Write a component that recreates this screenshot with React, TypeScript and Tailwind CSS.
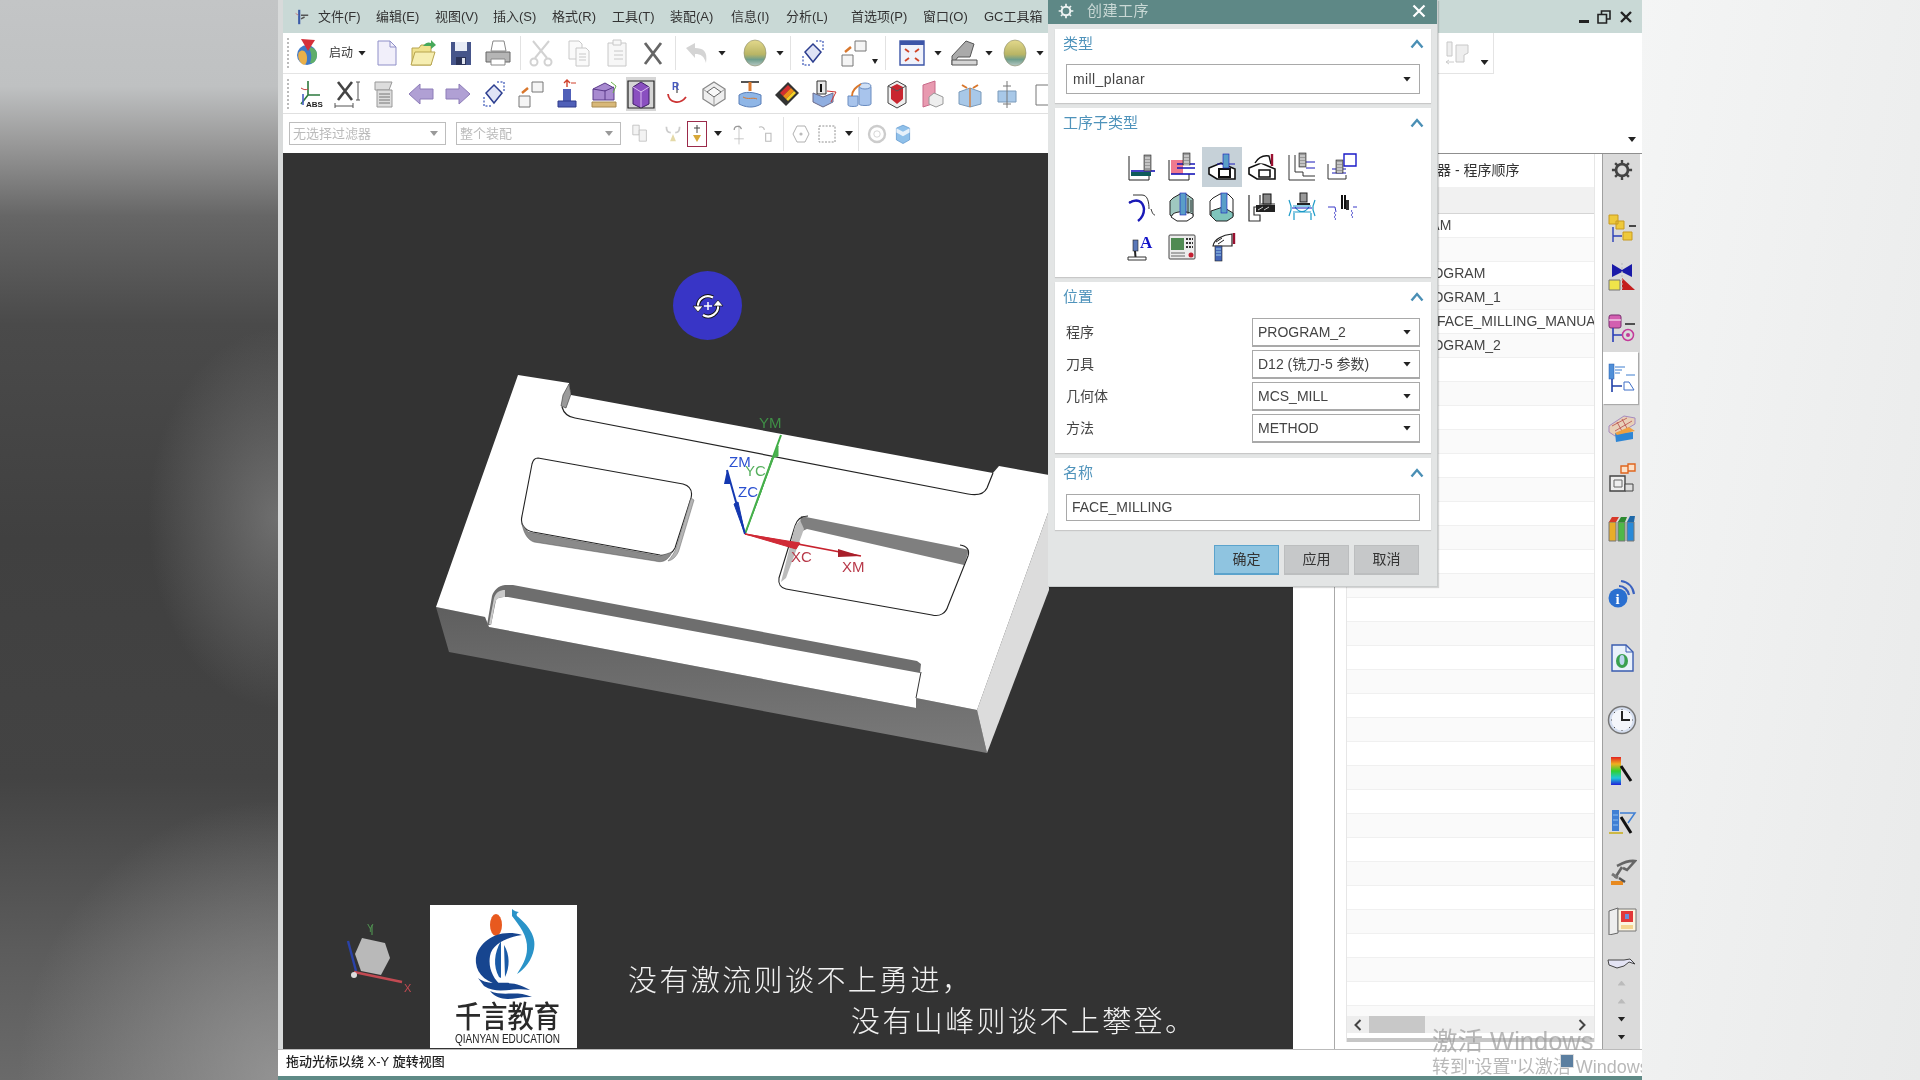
import React from "react";

type P = { children?: React.ReactNode; w?: string };
const I = ({ children, s = "w-[30px] h-[30px]" }: { children?: React.ReactNode; s?: string }) => (
  <svg viewBox="0 0 30 30" className={s} fill="none">{children}</svg>
);
const C = ({ children, w }: P) => <div className={`${w} shrink-0 flex items-center justify-center`}>{children}</div>;
const Sp = ({ w }: P) => <div className={`${w} shrink-0`} />;
const Caret = ({ c = "bg-[#222]" }: { c?: string }) => (
  <div className={`w-[8px] h-[5px] ${c} [clip-path:polygon(0_0,100%_0,50%_100%)]`} />
);
const Sep = ({ w }: P) => (
  <div className={`${w} shrink-0 flex justify-center`}><div className="w-px h-[34px] bg-[#e2e2e2]" /></div>
);
const Grip = () => <div className="w-[10px] shrink-0 flex justify-center"><div className="h-[30px] border-l-2 border-dotted border-[#bbb]" /></div>;

const Egg = ({ id }: { id: string }) => (
  <I>
    <defs>
      <linearGradient id={id} x1="0" y1="0" x2="0" y2="1">
        <stop offset="0" stopColor="#e3d98c" /><stop offset="0.55" stopColor="#b9b565" /><stop offset="0.75" stopColor="#6f9e8c" /><stop offset="1" stopColor="#b8c9c4" />
      </linearGradient>
    </defs>
    <ellipse cx="15" cy="15" rx="11" ry="13" fill={`url(#${id})`} stroke="#8a8a6a" strokeWidth="0.6" />
  </I>
);

/* toolbar row 1 drawings */
const NxLogo = () => (
  <I s="w-[32px] h-[36px]">
    <circle cx="14" cy="17" r="10" fill="#3f78c8" />
    <path d="M6 14c4-4 8 0 8 6s-2 8-5 6c-3-3-5-8-3-12Z" fill="#e9b04a" />
    <path d="M15 9c5 0 10 3 9 9s-4 8-7 7c2-5 2-11-2-16Z" fill="#5fae6a" />
    <path d="M8 1l14 1-7 11Z" fill="#d6303a" />
  </I>
);
const NewDoc = () => <I><path d="M6 3h12l6 6v18H6Z" fill="#f1effa" stroke="#8f8fc8" /><path d="M18 3v6h6" stroke="#8f8fc8" /></I>;
const Open = () => <I><path d="M4 10h7l2-3h10v20H4Z" fill="#f0e28e" stroke="#b7a44f" /><path d="M3 27l4-13h20l-4 13Z" fill="#f6eeb2" stroke="#b7a44f" /><path d="M15 8c3-4 6-4 8-3V2l5 5-5 4V8c-3 0-5 0-8 0Z" fill="#46a85a" /></I>;
const Save = () => <I><path d="M5 4h20v23H5Z" fill="#46558a" /><path d="M9 4h12v9H9Z" fill="#e8ecf5" /><path d="M10 19h10v8H10Z" fill="#2b3358" /><path d="M16 20h3v6h-3Z" fill="#dfe3ee" /></I>;
const Print = () => <I><path d="M10 3h11l2 10H8Z" fill="#fff" stroke="#888" /><path d="M3 14h24v10H3Z" fill="#b5b5b5" stroke="#666" /><path d="M8 21h14v6H8Z" fill="#fff" stroke="#888" /></I>;
const Cut = () => <I><g stroke="#d2d2d2" strokeWidth="2"><path d="M9 20 23 3M21 20 7 3" /><circle cx="8" cy="24" r="3.5" /><circle cx="22" cy="24" r="3.5" /></g></I>;
const Copy = () => <I><g stroke="#c8c8c8" fill="#fafafa"><path d="M5 3h10l3 3v15H5Z" /><path d="M12 10h10l3 3v15H12Z" /><path d="M15 16h7M15 19h7M15 22h7" /></g></I>;
const Paste = () => <I><g stroke="#c8c8c8" fill="#f7f7f7"><path d="M6 5h18v23H6Z" /><path d="M11 2h8v5h-8Z" /><path d="M12 13h9M12 17h9M12 21h9" /></g></I>;
const XX = () => <I><path d="M7 5l16 21M23 5 7 26" stroke="#666" strokeWidth="2.8" /></I>;
const Undo = () => <I><path d="M4 10 13 5v5c8 0 13 3 11 15-2-7-5-9-11-9v4Z" fill="#d4d4d4" /></I>;
const Diamond = () => <I><path d="M15 6l8 8-8 10-8-10Z" fill="#dfe3f5" stroke="#2c3e8f" strokeWidth="1.5" /><path d="M5 18v9h8M25 12V3h-8" stroke="#5d74c4" strokeDasharray="2 1.5" strokeWidth="1.5" /></I>;
const Squares = () => <I><path d="M16 3h11v10H16ZM3 17h11v11H3Z" fill="#f5f5f5" stroke="#777" /><path d="M6 14l6-5" stroke="#d9772c" strokeWidth="2.4" /></I>;
const Fit = () => <I><path d="M3 3h24v24H3Z" fill="#f0f2fb" stroke="#3c55a8" strokeWidth="1.4" /><path d="M3 3h24v4H3Z" fill="#3c55a8" /><path d="M8 11l4 3M22 11l-4 3M8 23l4-3M22 23l-4-3" stroke="#d0452a" strokeWidth="1.8" /></I>;
const Shape = () => <I><path d="M3 27V18L17 3l8 3-4 13H9Z" fill="#aaa" stroke="#555" /><path d="M3 22h25v5H3Z" fill="#d5d5d5" stroke="#555" /></I>;

/* toolbar row 2 drawings */
const R2: React.ReactNode[] = [
  <I key="0"><path d="M12 2v14H24M12 16 5 25" stroke="#2d7a3e" strokeWidth="1.6" /><path d="M5 9c3 2 5 2 7 1" stroke="#c43a3a" /><path d="M7 15v11" stroke="#4a5fc4" strokeWidth="1.6" /><text x="10" y="28" fontSize="8" fontWeight="700" fill="#222" fontFamily="Liberation Sans">ABS</text></I>,
  <I key="1"><path d="M5 3l14 18M19 3 5 21" stroke="#444" strokeWidth="2.6" /><path d="M23 3h4M25 3v18M23 21h4M2 27h18M2 24v5M20 24v5" stroke="#555" /></I>,
  <I key="2"><g fill="#ddd" stroke="#999"><path d="M6 3h17l-3 8H6Z" /><path d="M8 11h15v17H8Z" /></g><path d="M10 15h11M10 18h11M10 21h11M10 24h11" stroke="#777" /></I>,
  <I key="3"><path d="M3 15 14 5v5h13v10H14v5Z" fill="#b0a0d4" stroke="#8d7cb8" /></I>,
  <I key="4"><path d="M27 15 16 5v5H3v10h13v5Z" fill="#b0a0d4" stroke="#8d7cb8" /></I>,
  <Diamond key="5" />,
  <Squares key="6" />,
  <I key="7"><path d="M11 10h8v12h-8Z" fill="#5060b8" /><path d="M6 22h18v6H6Z" fill="#5060b8" stroke="#2e3b8a" /><path d="M15 8V1M12 4l3-3 3 3" stroke="#d0402a" strokeWidth="1.4" /><path d="M19 4h5" stroke="#d0402a" /></I>,
  <I key="8"><path d="M4 10 16 4l9 5v12H4Z" fill="#a88ad0" stroke="#5b3a8a" /><path d="M16 11V21M4 10l12 2 9-4" stroke="#5b3a8a" /><path d="M3 23h24v5H3Z" fill="#d8b878" stroke="#a88a50" /><path d="M22 3l5 4-3 7" stroke="#6ab04a" /></I>,
  <div key="9" className="bg-[#d6d6d6] w-[30px] h-[34px] flex items-center justify-center"><I><path d="M7 8l8-5 8 5v17l-8 4-8-4Z" fill="#8a4fc0" stroke="#3e1f66" /><path d="M15 12v17M7 8l8 5 8-5" stroke="#d8b8f0" /><path d="M2 2h26v27H2Z" stroke="#222" strokeWidth="1.2" /></I></div>,
  <I key="10"><path d="M6 15c1 9 12 11 18 3" stroke="#c33" strokeWidth="1.8" /><path d="M15 14V4" stroke="#666" strokeWidth="1.4" /><text x="10" y="11" fontSize="10" fontWeight="700" fill="#4659c0" fontFamily="Liberation Sans">R</text></I>,
  <I key="11"><path d="M15 3 26 10v10L15 27 4 20V10Z" fill="#eee" stroke="#888" strokeWidth="1.3" /><path d="M15 8l7 5-7 5-7-5Z" fill="#f8f8f8" stroke="#666" /><path d="M15 27V18M4 10l4 3M26 10l-4 3" stroke="#999" /></I>,
  <I key="12"><path d="M6 3h18" stroke="#555" strokeWidth="2" /><path d="M15 3v9" stroke="#d9772c" strokeWidth="3" /><path d="M4 16c6-4 14-3 22 0v9c-8 5-16 3-22 0Z" fill="#8fb6e6" stroke="#5a7fb8" /><path d="M8 18c5 3 10 0 14 2" stroke="#d9772c" /></I>,
  <I key="13"><path d="M3 16 16 3l11 11-13 13Z" fill="#333" /><path d="M8 14 16 6l3 3-8 8Z" fill="#d32f2f" /><path d="M11 17l8-8 3 3-8 8Z" fill="#ef8c1a" /><path d="M14 20l8-8 2 2-8 8Z" fill="#f5d32a" /></I>,
  <I key="14"><path d="M8 2h9v13H8Z" fill="#e8e8e8" stroke="#333" /><path d="M12 5v8" stroke="#111" strokeWidth="2" /><path d="M4 14l10 4 10-4v9l-10 5-10-5Z" fill="#90aee0" stroke="#6a6a8a" /><path d="M18 12l9 1-5 10" stroke="#c33" /></I>,
  <I key="15"><path d="M14 8h12v17c0 2-12 2-12 0Z" fill="#a8c4ec" stroke="#6a8cc0" /><ellipse cx="20" cy="7" rx="6" ry="3" fill="#cfe0f6" stroke="#6a8cc0" /><path d="M3 17h10v9c0 2-10 2-10 0Z" fill="#a8c4ec" stroke="#6a8cc0" /><path d="M7 17c0-6 4-9 9-12" stroke="#d9772c" strokeWidth="1.8" /></I>,
  <I key="16"><path d="M6 7 15 2l9 5v17l-9 5-9-5Z" fill="#eee" stroke="#444" /><path d="M9 8l6-3 6 3v12l-6 5-6-5Z" fill="#c9252f" /><path d="M6 7l9 5 9-5" stroke="#555" /></I>,
  <I key="17"><path d="M5 6l12-4v22L5 28Z" fill="#e89ab0" stroke="#c86a8a" /><path d="M16 14l9 4v7l-7 3-7-3v-7Z" fill="#eee" stroke="#999" /></I>,
  <I key="18"><path d="M4 13l11-4 11 4v12l-11 3-11-3Z" fill="#a8c8e8" stroke="#7a9aba" /><path d="M15 9v19" stroke="#d9772c" strokeWidth="1.3" /><path d="M7 6l5 3M23 6l-5 3" stroke="#d9772c" strokeWidth="2" /></I>,
  <I key="19"><path d="M6 12h18v11H6Z" fill="#a8c8e8" stroke="#7a9aba" /><path d="M15 2v27M11 7h8M11 25h8" stroke="#777" /></I>,
  <I key="20"><path d="M8 6h18v20H8Z" fill="#fff" stroke="#777" /></I>,
];

/* operation subtype drawings in the dialog */
const Tl = ({ x, y, h }: { x: number; y: number; h: number }) => (
  <g><rect x={x} y={y} width="7" height={h} fill="#9a9a9a" stroke="#222" strokeWidth="0.6" /><path d={`M${x + 1} ${y + 3}h5M${x + 1} ${y + 6}h5M${x + 1} ${y + 9}h5M${x + 1} ${y + 12}h5`} stroke="#eee" /></g>
);
const Ops: React.ReactNode[] = [
  <I key="a"><path d="M2 4v24h20v-8" stroke="#222" /><path d="M4 20h20v4H4Z" fill="#0f5c5a" /><path d="M4 19h24" stroke="#1616b8" strokeWidth="1.6" /><Tl x={17} y={3} h={16} /></I>,
  <I key="b"><path d="M2 8v20h20v-6" stroke="#222" /><path d="M4 8h12v14H4Z" fill="#f07a8e" /><path d="M10 12h18M10 16h18" stroke="#1616b8" strokeWidth="1.4" /><path d="M4 22h24" stroke="#1616b8" strokeWidth="1.6" /><Tl x={16} y={1} h={12} /></I>,
  <I key="c"><path d="M2 16 14 11l14 6v10H10L2 22Z" fill="#fff" stroke="#111" strokeWidth="1.6" /><path d="M12 17h11v8H12Z" fill="#fff" stroke="#111" strokeWidth="2" /><path d="M10 12l18 0" stroke="#1a1ab8" /><rect x="16" y="2" width="6" height="14" fill="#5a9ec8" stroke="#1a1ab8" strokeWidth="0.6" /></I>,
  <I key="d"><path d="M2 16 14 11l14 6v10H10L2 22Z" fill="#fff" stroke="#111" strokeWidth="1.6" /><path d="M12 18h11v7H12Z" fill="#fff" stroke="#111" strokeWidth="1.6" /><path d="M8 11c3-5 8-8 14-7l2 8" fill="#fff" stroke="#111" strokeWidth="1.4" /><path d="M25 2v12" stroke="#9a1030" strokeWidth="2.4" /></I>,
  <I key="e"><path d="M2 3v25h26M8 3v17h8v4h12" stroke="#333" /><path d="M19 10h9M19 16h9" stroke="#1616b8" /><Tl x={12} y={1} h={14} /></I>,
  <I key="f"><path d="M1 12v15h18v-4" stroke="#333" /><path d="M5 21h14M5 17h14" stroke="#1616b8" /><Tl x={9} y={8} h={13} /><path d="M17 2h12v12H17Z" fill="#fff" stroke="#1a1ac8" strokeWidth="1.4" /></I>,
  <I key="g"><path d="M2 10c6-2 8-2 8 0M6 3h9c6 0 7 8 7 14M24 17c1 3 2 6 4 6" stroke="#333" /><path d="M2 11c8-5 14-2 15 6 0 5-2 9-6 12" stroke="#1a1ab8" strokeWidth="2.4" /></I>,
  <I key="h"><path d="M6 6 13 2h6l7 5v17l-7 4h-9l-7-5V9Z" fill="#9fc8c0" stroke="#222" /><path d="M6 22c4-3 14-3 20 0v3l-6 4H10l-6-4Z" fill="#fff" stroke="#222" /><rect x="13" y="1" width="6" height="22" fill="#5a9ec8" stroke="#1a1ab8" strokeWidth="0.6" /><path d="M21 6v16M24 8v12" stroke="#333" /></I>,
  <I key="i"><path d="M6 6 13 2h8l5 5v17l-6 4H8l-5-5V9Z" fill="#fff" stroke="#222" /><path d="M4 19l12-4 10 6v4l-6 4H9l-5-5Z" fill="#7fc4bc" stroke="#222" /><rect x="14" y="1" width="6" height="20" fill="#5a9ec8" stroke="#1a1ab8" strokeWidth="0.6" /></I>,
  <I key="j"><path d="M2 3v26h11v-6h-6v-8h6V3M14 12h14" stroke="#333" strokeWidth="1.2" /><rect x="16" y="2" width="8" height="10" fill="#888" stroke="#111" /><rect x="9" y="13" width="19" height="7" fill="#222" /><path d="M11 18l5-3M17 18l5-3" stroke="#ccc" /></I>,
  <I key="k"><rect x="13" y="1" width="7" height="9" fill="#999" stroke="#222" /><path d="M10 11h13v2H10Z" fill="#222" /><path d="M2 8l2 6v4l-2 6M28 8l-2 6v4l2 6M6 14h18M6 20h18M8 15c4 6 10 6 14 0M7 21v7M24 21v7" stroke="#1a9ac8" strokeWidth="1.2" /><path d="M5 16h20" stroke="#1a1ab8" /></I>,
  <I key="l"><path d="M15 3v14M18 3v14" stroke="#111" strokeWidth="2" /><path d="M19 8h3v10h-3Z" fill="#333" /><path d="M1 15h7l1 5M26 15h4M8 20c-2 2 2 2 0 4s2 2 0 4M25 18c-2 2 2 2 0 4s2 2 0 4" stroke="#3a3ac8" /></I>,
  <I key="m"><rect x="6" y="8" width="5" height="11" fill="#5a78b8" stroke="#222" strokeWidth="0.6" /><path d="M8 19l0.5 6" stroke="#222" strokeWidth="2" /><path d="M1 25h18v3H1Z" fill="#fff" stroke="#333" /><text x="13" y="16" fontSize="17" fontWeight="700" fill="#1414c8" fontFamily="Liberation Serif">A</text></I>,
  <I key="n"><rect x="2" y="3" width="26" height="24" rx="1" fill="#ececec" stroke="#444" /><rect x="4" y="6" width="13" height="12" fill="#4f8a52" /><path d="M19 7h7M19 11h7M19 15h7" stroke="#333" strokeWidth="2" strokeDasharray="2 1" /><path d="M4 21h14M4 24h14" stroke="#666" /><circle cx="24" cy="23" r="2.5" fill="#c42032" /></I>,
  <I key="o"><path d="M6 14C7 7 16 3 25 2v12Z" fill="#fff" stroke="#222" strokeWidth="1.2" /><path d="M9 10l6-4M11 12l6-4" stroke="#222" /><path d="M27 1v11" stroke="#9a1030" strokeWidth="2.4" /><rect x="8" y="14" width="7" height="15" fill="#4466b8" stroke="#222" strokeWidth="0.6" /><path d="M9 17h5M9 20h5M9 23h5" stroke="#9fd0ea" /></I>,
];

/* right rail drawings */
const Gear = ({ c = "#444", s = "w-[22px] h-[22px]" }: { c?: string; s?: string }) => (
  <svg viewBox="0 0 24 24" className={s} fill="none">
    <circle cx="12" cy="12" r="6.5" stroke={c} strokeWidth="3" />
    <path d="M12 1v4M12 19v4M1 12h4M19 12h4M4.5 4.5l3 3M16.5 16.5l3 3M19.5 4.5l-3 3M7.5 16.5l-3 3" stroke={c} strokeWidth="2.6" />
  </svg>
);
const Rail1: React.ReactNode[] = [
  <I key="1"><path d="M2 2h9v9H2ZM9 8h8v8H9Z" fill="#eec93c" stroke="#c89a20" /><path d="M16 19h9v8h-9Z" fill="#eec93c" stroke="#c89a20" /><path d="M22 13h7" stroke="#222" strokeWidth="1.6" /><path d="M6 14v15M6 23h9" stroke="#2a3fb8" strokeWidth="1.4" /></I>,
  <I key="2"><path d="M5 2l10 6 10-6v13l-10-5-10 5Z" fill="#1a1aa8" /><path d="M2 18h11v10H2Z" fill="#f0e44a" stroke="#777" /><path d="M15 28V16l13 12Z" fill="#c41e1e" /><path d="M15 1v28" stroke="#bbb" strokeDasharray="2 2" /></I>,
  <I key="3"><rect x="2" y="2" width="12" height="13" rx="2" fill="#d35fb0" stroke="#7a2f70" /><path d="M2 7h12" stroke="#fff" /><path d="M18 11h10" stroke="#222" strokeWidth="1.5" /><path d="M6 15v14M6 22h9" stroke="#2a3fb8" strokeWidth="1.6" /><circle cx="21" cy="22" r="5.5" stroke="#c33a9a" strokeWidth="1.5" /><circle cx="21" cy="22" r="2" fill="#c33a9a" /></I>,
];
const Rail2: React.ReactNode[] = [
  <I key="4"><rect x="3" y="1" width="5" height="15" fill="#4f8fd8" stroke="#2a5fb0" strokeWidth="0.5" /><path d="M9 4h10M9 7h7M9 10h5M20 12h9" stroke="#3f7fcf" /><path d="M6 16v13M6 23h10" stroke="#1f3fa8" strokeWidth="1.6" /><path d="M18 19v8h10l-5-8Z" stroke="#3f6fc8" /></I>,
  <I key="5"><path d="M2 12 17 2l11 2v6L8 22 2 18Z" fill="#e8d0b8" stroke="#a58ac0" /><path d="M5 12l15-8M8 17l17-10M10 8l6 11M15 5l6 11" stroke="#b84a4a" strokeWidth="0.8" /><path d="M8 19l18-1v7l-17 3Z" fill="#2f86d4" /><path d="M8 19l14-6 6 4-18 4Z" fill="#f0a040" /></I>,
  <I key="6"><path d="M3 13h15v15H3Z" fill="#eee" stroke="#444" strokeWidth="1.4" /><path d="M7 17h8v7H7Z" stroke="#666" /><path d="M18 21h8v7H18Z" fill="#ddd" stroke="#444" /><path d="M14 3h7v7h-7ZM21 1h7v7h-7Z" fill="#fbe0c8" stroke="#e0651e" strokeWidth="1.4" /></I>,
  <I key="7"><path d="M2 9h7v19H2Z" fill="#e8ad2a" stroke="#777" /><path d="M2 9l3-5h7L9 9Z" fill="#d8392a" /><path d="M11 9h7v19h-7Z" fill="#4fb848" stroke="#777" /><path d="M11 9l3-5h6l-2 5Z" fill="#2e8a30" /><path d="M20 9h7v19h-7Z" fill="#2a8ad8" stroke="#777" /><path d="M20 9l3-6h5l-1 6Z" fill="#1f68a8" /></I>,
  <I key="8"><circle cx="11" cy="20" r="9.5" fill="#2a6fd0" /><text x="8.5" y="26" fontSize="15" fontWeight="700" fill="#fff" fontFamily="Liberation Serif">i</text><path d="M12 8c5 0 9 4 10 9M14 3c7 1 12 6 13 13" stroke="#3a62c0" strokeWidth="2.2" /></I>,
  <I key="9"><path d="M5 2h14l7 7v19H5Z" fill="#e9f1fb" stroke="#3a5cb0" strokeWidth="1.4" /><path d="M19 2v7h7" stroke="#3a5cb0" /><ellipse cx="15" cy="18" rx="6" ry="7" fill="#3aa050" /><ellipse cx="15" cy="17" rx="2.5" ry="5" fill="#bcd6ee" /></I>,
  <I key="10"><circle cx="15" cy="15" r="13.5" fill="#d6dff0" stroke="#777" strokeWidth="1.5" /><circle cx="15" cy="15" r="10.5" fill="#f4f6fb" /><path d="M15 6v9h8" stroke="#222" strokeWidth="2" /><path d="M15 4v1M15 25v1M4 15h1M25 15h1M7 7l1 1M23 7l-1 1M7 23l1-1M23 23l-1-1" stroke="#555" /></I>,
  <I key="11"><defs><linearGradient id="spec" x1="0" y1="0" x2="0" y2="1"><stop offset="0" stopColor="#e32020" /><stop offset="0.25" stopColor="#f0b020" /><stop offset="0.5" stopColor="#30d030" /><stop offset="0.75" stopColor="#20c8d8" /><stop offset="1" stopColor="#2020d8" /></linearGradient></defs><rect x="4" y="1" width="10" height="28" fill="url(#spec)" /><path d="M14 10l10 15" stroke="#111" strokeWidth="3" /></I>,
  <I key="12"><path d="M5 3h7v21H5Z" fill="#3f7fd4" /><path d="M6 8h5M6 13h5M6 18h5" stroke="#8fc0f0" /><path d="M2 26h14" stroke="#c8b020" strokeWidth="1.6" /><path d="M13 6h15l-7 10" stroke="#3f7fd4" strokeWidth="1.5" /><path d="M14 10l10 16" stroke="#111" strokeWidth="3" /></I>,
  <I key="13"><path d="M10 10c4-2 10-6 18-5l-8 9-4-2M15 11 8 22" stroke="#666" strokeWidth="2.6" /><path d="M5 18l6 4" stroke="#777" strokeWidth="3" /><path d="M4 25h12v4H4Z" fill="#e88a20" /><path d="M12 22l6 4" stroke="#555" strokeWidth="2.4" /></I>,
  <I key="14"><path d="M2 6l9-3v25l-9 2Z" fill="#eee" stroke="#666" /><path d="M11 4h18v22H11Z" fill="#fbf4e0" stroke="#777" /><path d="M14 6h12v11H14Z" fill="#e23838" /><path d="M18 9h4v5h-4Z" fill="#6a8cd8" /><path d="M14 20h12v4H14Z" fill="#f5d490" /></I>,
];

const Field = ({ v }: { v: string }) => (
  <div className="w-[168px] h-[29px] border border-[#a9a9a9] border-b-2 bg-white flex items-center pl-[5px] pr-[8px] text-[14px] text-[#444]">
    <span className="flex-1 whitespace-nowrap">{v}</span><Caret />
  </div>
);
const Chevron = () => (
  <svg viewBox="0 0 14 10" className="w-[14px] h-[10px]" fill="none"><path d="M1.5 8.5 7 2l5.5 6.5" stroke="#4a8fb5" strokeWidth="2.4" /></svg>
);
const Head = ({ t }: { t: string }) => (
  <div className="h-[30px] flex items-center justify-between pl-[8px] pr-[7px] text-[15px] text-[#4f93bb]"><span>{t}</span><Chevron /></div>
);
const Btn = ({ t, a }: { t: string; a?: boolean }) => (
  <div className={`w-[65px] h-[30px] flex items-center justify-center text-[14px] text-[#333] border-b-2 ${a ? "bg-[#8fc4e0] border border-[#5ba3cc]" : "bg-[#c6c8c9] border border-[#bcbebf]"}`}>{t}</div>
);

const Dialog = () => (
  <div className="absolute left-[770px] top-0 w-[390px] h-[587px] bg-[#e3e5e5] border-r border-b border-[#c9cccc] flex flex-col z-10 shadow-[1px_1px_1px_rgba(0,0,0,0.15)]">
    <div className="h-[24px] bg-[#5e8886] shrink-0 flex items-center pl-[10px] pr-[11px] pb-[3px]">
      <Gear c="#eef3f2" s="w-[16px] h-[16px]" />
      <span className="ml-[13px] text-[15px] leading-none text-[#c9d8d5] flex-1 tracking-[0.5px]">创建工序</span>
      <svg viewBox="0 0 14 14" className="w-[14px] h-[14px]" fill="none"><path d="M1.5 1.5l11 11M12.5 1.5l-11 11" stroke="#fff" strokeWidth="2.2" /></svg>
    </div>
    <div className="ml-[7px] mr-[6px] mt-[5px] h-[74px] bg-white shadow-[0_1px_1px_#c8c8c8]">
      <Head t="类型" />
      <div className="mx-[11px] mt-[5px] h-[30px] border border-[#a9a9a9] flex items-center pl-[6px] pr-[8px] text-[14px] text-[#444]">
        <span className="flex-1 tracking-[0.4px]">mill_planar</span><Caret />
      </div>
    </div>
    <div className="ml-[7px] mr-[6px] mt-[5px] h-[169px] bg-white shadow-[0_1px_1px_#c8c8c8]">
      <Head t="工序子类型" />
      <div className="ml-[67px] mt-[9px] grid grid-cols-[repeat(6,40px)] auto-rows-[40px]">
        {Ops.map((o, i) => (
          <div key={i} className={`flex items-center justify-center ${i === 2 ? "bg-[#c6d1d8]" : ""}`}>{o}</div>
        ))}
      </div>
    </div>
    <div className="ml-[7px] mr-[6px] mt-[5px] h-[171px] bg-white shadow-[0_1px_1px_#c8c8c8]">
      <Head t="位置" />
      <div className="mt-[6px] pl-[11px] pr-[11px] flex flex-col gap-[3px]">
        {[["程序", "PROGRAM_2"], ["刀具", "D12 (铣刀-5 参数)"], ["几何体", "MCS_MILL"], ["方法", "METHOD"]].map(([a, b]) => (
          <div key={a} className="flex items-center justify-between text-[14px] text-[#444]"><span>{a}</span><Field v={b} /></div>
        ))}
      </div>
    </div>
    <div className="ml-[7px] mr-[6px] mt-[5px] h-[72px] bg-white shadow-[0_1px_1px_#c8c8c8]">
      <Head t="名称" />
      <div className="mx-[11px] mt-[6px] h-[27px] border border-[#a9a9a9] flex items-center pl-[5px] text-[14px] text-[#444]">FACE_MILLING</div>
    </div>
    <div className="mt-[15px] flex justify-end gap-[5px] pr-[18px]">
      <Btn t="确定" a /><Btn t="应用" /><Btn t="取消" />
    </div>
  </div>
);

const Model = () => (
  <svg viewBox="283 153 1010 895" className="absolute inset-0 w-[1010px] h-[895px]" fill="none">
    <defs>
      <linearGradient id="front" x1="0" y1="0" x2="0" y2="1"><stop offset="0" stopColor="#5f5f5f" /><stop offset="1" stopColor="#7a7a7a" /></linearGradient>
    </defs>
    <path d="M436 607 449 652 987 753 977 710 916 698 916 708 489 627 485 617Z" fill="url(#front)" />
    <path d="M977 710 987 753 1049 590V510Z" fill="#dcdcdc" />
    <path d="M518 375 569 383 571 395 993 473 999 466 1049 475V510L977 710 916 698 916 708 489 627 485 617 436 607Z" fill="#fff" />
    {/* top slot */}
    <path d="M569 384 571 394 566 408 561 406 563 395Z" fill="#9a9a9a" stroke="#333" strokeWidth="0.6" />
    <path d="M562 407C564 414 568 417 575 418L968 494C978 496 984 494 987 488L993 473" stroke="#222" strokeWidth="1.2" />
    {/* left pocket */}
    <path d="M538 458 683 484C690 486 693 490 691 498L675 548C672 554 667 556 660 555L533 532C524 530 520 524 522 516L532 464C533 460 535 458 538 458Z" fill="#fff" stroke="#222" strokeWidth="1.1" />
    <path d="M522 524 528 532 660 556 672 552C668 561 662 563 655 561L534 542C528 540 524 534 522 524Z" fill="#8a8a8a" stroke="#555" strokeWidth="0.5" />
    <path d="M691 498 694 500 679 550C677 556 673 560 668 561 672 556 675 552 676 548Z" fill="#b5b5b5" stroke="#666" strokeWidth="0.5" />
    {/* right pocket */}
    <path d="M801 516 956 547 969 550 964 565 807 529 798 533Z" fill="#7f7f7f" />
    <path d="M808 516C802 516 797 519 795 526L779 578C778 584 781 588 786 589L932 615C940 617 946 613 948 606L968 556C970 550 967 546 960 545" stroke="#222" strokeWidth="1.1" />
    <path d="M795 526 800 520 804 529 786 578 781 582Z" fill="#bbb" />
    {/* bottom slot */}
    <path d="M505 585C498 586 494 590 492 596L487 625 491 625 496 600C498 597 502 597 508 597L920 673 921 664 917 661 513 585Z" fill="#6e6e6e" />
    <path d="M489 624 494 598C496 592 500 590 505 590L505 597C499 597 497 598 495 603L491 625Z" fill="#c9c9c9" />
    <path d="M921 672 916 698" stroke="#333" strokeWidth="1" />
    {/* axes */}
    <path d="M745 534 781 435" stroke="#3fae45" strokeWidth="2" />
    <path d="M745 534 761 492 772 458 778 456 778 446 Z" fill="#49b04e" stroke="#49b04e" />
    <path d="M745 534 727 470" stroke="#1438b0" strokeWidth="2" />
    <path d="M745 534 734 504 738 502Z" fill="#1438b0" stroke="#1438b0" /><path d="M727 470 724 484 731 484Z" fill="#1438b0" />
    <path d="M745 534 861 556" stroke="#c8222e" strokeWidth="1.6" />
    <path d="M745 534 800 543 796 549Z" fill="#d02a36" stroke="#d02a36" />
    <path d="M838 549 861 556 838 557Z" fill="#a81f2a" />
    <g fontFamily="'Liberation Sans',sans-serif" fontSize="15">
      <text x="759" y="428" fill="#3f8f46">YM</text>
      <text x="745" y="476" fill="#58b060">YC</text>
      <text x="729" y="467" fill="#2a50d0">ZM</text>
      <text x="738" y="497" fill="#2a50d0">ZC</text>
      <text x="791" y="562" fill="#b83a4a">XC</text>
      <text x="842" y="572" fill="#b83a4a">XM</text>
    </g>
    {/* triad */}
    <path d="M355 954 362 938 385 943 390 958 381 975 361 971Z" fill="#b9b9b9" />
    <path d="M372 935v-10" stroke="#4f8f50" strokeWidth="1.2" />
    <path d="M348 941 356 971" stroke="#2a42a8" strokeWidth="2.4" />
    <path d="M354 972 402 982" stroke="#c24a52" strokeWidth="2.5" />
    <circle cx="354" cy="975" r="3" fill="#ddd" />
    <text x="404" y="992" fontSize="11" fill="#c24a52" fontFamily="'Liberation Sans',sans-serif">X</text>
    <text x="367" y="932" fontSize="10" fill="#4f8f50" fontFamily="'Liberation Sans',sans-serif">Y</text>
  </svg>
);

const Logo = () => (
  <svg viewBox="0 0 147 143" className="w-[147px] h-[143px]" fill="none">
    <rect width="147" height="143" fill="#fff" />
    <ellipse cx="66" cy="20" rx="6" ry="11" fill="#e8591e" />
    <path d="M82 4c2 2 5 3 7 3-2 1-3 2-2 4 10 8 20 20 17 33-2 11-9 20-17 25 5-8 10-16 10-25 1-13-8-24-15-33Z" fill="#2a93c8" />
    <path d="M92 30C66 22 44 40 46 58c1 12 12 20 26 23-9-7-14-18-12-30 2-11 14-18 32-21Z" fill="#17458f" />
    <path d="M71 36c-7 12-8 25-2 36l2 1ZM74 40c6 10 6 22 1 32Z" fill="#1a5aa6" />
    <path d="M48 73c14 11 30-2 52 12-18-3-32 5-46-4ZM60 86c14 6 26-1 42 6-16-1-30 8-42-6Z" fill="#17458f" />
    <text x="25" y="122" fontSize="30" fontWeight="500" fill="#2a2a2a" textLength="105" lengthAdjust="spacingAndGlyphs" fontFamily="'Noto Sans CJK SC',sans-serif">千言教育</text>
    <text x="25" y="138" fontSize="12" fill="#222" textLength="105" lengthAdjust="spacingAndGlyphs" fontFamily="'Liberation Sans',sans-serif">QIANYAN EDUCATION</text>
  </svg>
);

const MENU: [string, string][] = [
  ["文件(F)", "w-[58px]"], ["编辑(E)", "w-[59px]"], ["视图(V)", "w-[58px]"], ["插入(S)", "w-[59px]"], ["格式(R)", "w-[60px]"], ["工具(T)", "w-[58px]"],
  ["装配(A)", "w-[61px]"], ["信息(I)", "w-[55px]"], ["分析(L)", "w-[65px]"], ["首选项(P)", "w-[72px]"], ["窗口(O)", "w-[61px]"], ["GC工具箱", "w-[70px]"],
];

const TREE: Record<number, [string, string]> = {
  0: ["NC_PROGRAM", "pl-[4px]"],
  2: ["PROGRAM", "pl-[66px]"],
  3: ["PROGRAM_1", "pl-[66px]"],
  4: ["FACE_MILLING_MANUAL", "pl-[90px]"],
  5: ["PROGRAM_2", "pl-[66px]"],
};

export default function App() {
  return (
    <div className="w-[1920px] h-[1080px] flex overflow-hidden [font-family:'Liberation_Sans','Noto_Sans_CJK_SC',sans-serif]">
      <div className="w-[278px] shrink-0 bg-[radial-gradient(ellipse_130px_190px_at_100%_48%,rgba(130,130,130,0.7),transparent),radial-gradient(ellipse_260px_280px_at_100%_100%,rgba(160,160,160,0.75),transparent),linear-gradient(180deg,#c3c5c6_0%,#bfc1c2_8%,#9b9b9b_13%,#666_20%,#4a4a4a_30%,#404040_50%,#434343_72%,#5c5c5c_88%,#6a6a6a_100%)]" />

      <div className="w-[1364px] shrink-0 relative overflow-hidden bg-white flex flex-col blur-[0.35px]">
        {/* menu bar */}
        <div className="h-[33px] shrink-0 bg-[#c9d9d6] flex items-center text-[13px] text-[#333] border-l-[5px] border-l-[#d8dada]">
          <div className="w-[35px] shrink-0 flex justify-center">
            <svg viewBox="0 0 20 20" className="w-[18px] h-[18px]" fill="none"><path d="M8 2v16" stroke="#3a5aa8" strokeWidth="2.4" /><path d="M10 8h8M10 12l4-2" stroke="#555" strokeWidth="1.6" /><path d="M4 6l3 2" stroke="#c77" /></svg>
          </div>
          {MENU.map(([t, w]) => <div key={t} className={`${w} shrink-0 whitespace-nowrap`}>{t}</div>)}
          <div className="ml-auto flex items-center gap-[8px] pr-[9px]">
            <div className="w-[10px] h-[3px] mt-[9px] bg-[#222]" />
            <svg viewBox="0 0 14 14" className="w-[14px] h-[14px]" fill="none"><path d="M1 4.5h8.5V13H1ZM4.5 4V1H13v8h-3" stroke="#222" strokeWidth="1.6" /></svg>
            <svg viewBox="0 0 14 14" className="w-[14px] h-[14px]" fill="none"><path d="M2 2l10 10M12 2 2 12" stroke="#222" strokeWidth="2.4" /></svg>
          </div>
        </div>

        {/* tool bars */}
        <div className="h-[120px] shrink-0 bg-white pl-[5px] flex flex-col border-l-[5px] border-l-[#d8dada]">
          <div className="w-[1211px] h-[41px] -ml-[5px] flex items-center border-b border-r border-[#e4e4e4]">
            <Grip />
            <C w="w-[30px]"><NxLogo /></C>
            <div className="w-[47px] shrink-0 flex items-center pl-[6px] gap-[5px] text-[12px] text-[#333]"><span>启动</span><Caret /></div>
            <C w="w-[34px]"><NewDoc /></C><C w="w-[38px]"><Open /></C><C w="w-[38px]"><Save /></C><C w="w-[35px]"><Print /></C>
            <Sep w="w-[10px]" />
            <C w="w-[32px]"><Cut /></C><C w="w-[44px]"><Copy /></C><C w="w-[32px]"><Paste /></C><C w="w-[40px]"><XX /></C>
            <Sep w="w-[4px]" />
            <C w="w-[40px]"><Undo /></C><C w="w-[10px]"><Caret /></C><Sp w="w-[10px]" />
            <C w="w-[36px]"><Egg id="e1" /></C><Sp w="w-[2px]" /><C w="w-[10px]"><Caret /></C>
            <Sep w="w-[10px]" />
            <C w="w-[36px]"><Diamond /></C><Sp w="w-[5px]" /><C w="w-[36px]"><Squares /></C>
            <div className="w-[6px] shrink-0 flex justify-center self-end pb-[9px]"><Caret /></div>
            <Sep w="w-[14px]" />
            <C w="w-[40px]"><Fit /></C><Sp w="w-[1px]" /><C w="w-[10px]"><Caret /></C><Sp w="w-[1px]" />
            <C w="w-[40px]"><Shape /></C><C w="w-[10px]"><Caret /></C><Sp w="w-[1px]" />
            <C w="w-[40px]"><Egg id="e2" /></C><C w="w-[10px]"><Caret /></C>
            <Sp w="w-[395px]" />
            <C w="w-[35px]"><I><g stroke="#c8c8c8" fill="#eee"><path d="M4 4h5v14H4Z" /><path d="M13 7h12v8l-4 2v7H13Z" /></g><path d="M3 24h8M6 22l-3 2 3 2" stroke="#ccc" /></I></C>
            <div className="w-[19px] shrink-0 flex justify-center self-end pb-[8px]"><Caret /></div>
          </div>
          <div className="w-[1100px] h-[40px] -ml-[5px] flex items-center border-b border-[#e0e0e0]">
            <Grip />
            {R2.map((n, i) => <div key={i} className="w-[36.6px] shrink-0 flex items-center justify-center">{n}</div>)}
          </div>
          <div className="h-[39px] -ml-[5px] flex items-center text-[13px] text-[#bbb]">
            <Sp w="w-[6px]" />
            <div className="w-[157px] h-[23px] shrink-0 border border-[#bdbdbd] flex items-center pl-[3px] pr-[7px]"><span className="flex-1">无选择过滤器</span><Caret c="bg-[#999]" /></div>
            <Sp w="w-[10px]" />
            <div className="w-[165px] h-[23px] shrink-0 border border-[#bdbdbd] flex items-center pl-[3px] pr-[7px]"><span className="flex-1">整个装配</span><Caret c="bg-[#999]" /></div>
            <C w="w-[38px]"><I s="w-[24px] h-[24px]"><g stroke="#bbb" fill="#f3f3f3"><path d="M6 4h8v12H6Z" /><path d="M14 10h9v14h-9Z" /></g></I></C>
            <C w="w-[28px]"><I s="w-[22px] h-[22px]"><path d="M6 5c0 6 2 8 6 8M24 5c0 6-2 8-6 8" stroke="#ccc" strokeWidth="2.4" /><path d="M15 15l-4 10h8Z" fill="#e4d9a8" /></I></C>
            <div className="w-[20px] h-[26px] shrink-0 border border-[#9b2a4a] flex items-center justify-center"><svg viewBox="0 0 14 20" className="w-[14px] h-[20px]" fill="none"><path d="M7 1v8M4 4h6" stroke="#444" /><path d="M3 11h8L7 18Z" fill="#d8a838" /></svg></div>
            <Sp w="w-[6px]" /><C w="w-[10px]"><Caret /></C>
            <C w="w-[32px]"><I s="w-[24px] h-[24px]"><path d="M15 4v24M9 21h12" stroke="#bbb" /><path d="M9 10c0-6 8-6 9-1" stroke="#999" strokeWidth="1.6" /></I></C>
            <C w="w-[20px]"><I s="w-[24px] h-[24px]"><path d="M6 5c4-2 8 0 8 4M16 14h8v12h-8Z" stroke="#bbb" strokeWidth="1.6" /></I></C>
            <Sep w="w-[16px]" />
            <C w="w-[20px]"><I s="w-[24px] h-[24px]"><path d="M9 3h12l6 12-6 12H9L3 15Z" stroke="#aaa" strokeWidth="1.4" /><circle cx="15" cy="15" r="2.4" fill="#bbb" /></I></C>
            <Sp w="w-[6px]" />
            <C w="w-[20px]"><I s="w-[24px] h-[24px]"><path d="M3 3h24v24H3Z" stroke="#888" strokeDasharray="3 2" strokeWidth="1.4" /></I></C>
            <Sp w="w-[7px]" /><C w="w-[10px]"><Caret /></C>
            <Sep w="w-[8px]" />
            <C w="w-[30px]"><I s="w-[24px] h-[24px]"><circle cx="15" cy="15" r="10" stroke="#ccc" strokeWidth="3" /><circle cx="15" cy="15" r="4" stroke="#ccc" /></I></C>
            <C w="w-[22px]"><I s="w-[26px] h-[26px]"><path d="M6 7 15 3l9 4v16l-9 5-9-5Z" fill="#8fc0ea" stroke="#5a94cc" /><path d="M6 7l9 5 9-5v6l-9 5-9-5Z" fill="#e6f0fa" /></I></C>
            <div className="ml-auto mr-[6px] mt-[12px]"><Caret /></div>
          </div>
        </div>

        {/* body */}
        <div className="flex-1 min-h-0 flex bg-white border-l-[5px] border-l-[#d8dada]">
          <div className="w-[1010px] shrink-0 relative bg-[#333] overflow-hidden">
            <Model />
            <div className="absolute left-[390px] top-[118px] w-[69px] h-[69px] rounded-full bg-[#3835c6] flex items-center justify-center">
              <svg viewBox="0 0 36 36" className="w-[36px] h-[36px]" fill="none">
                <path d="M8 19A10 10 0 0 1 23 9.5M28 17A10 10 0 0 1 13 27" stroke="#111" strokeWidth="4" />
                <path d="M8 19A10 10 0 0 1 23 9.5M28 17A10 10 0 0 1 13 27" stroke="#fff" strokeWidth="2.2" />
                <path d="M3 18h10l-5 6ZM23 18h10l-5-6Z" fill="#fff" stroke="#111" strokeWidth="0.7" />
                <path d="M18 14v8M14 18h8" stroke="#fff" strokeWidth="1.5" />
              </svg>
            </div>
            <div className="absolute left-[147px] top-[752px]"><Logo /></div>
            <div className="absolute left-[345px] top-[810px] text-[29px] leading-[36px] text-[#f2f2f2] tracking-[2.4px] whitespace-nowrap font-light">没有激流则谈不上勇进，</div>
            <div className="absolute left-[568px] top-[851px] text-[29px] leading-[36px] text-[#f2f2f2] tracking-[2.4px] whitespace-nowrap font-light">没有山峰则谈不上攀登。</div>
          </div>
          <div className="flex-1 min-w-0 flex border-t border-[#8f8f8f] pt-0">
            <div className="w-[42px] shrink-0 border-r border-[#aaa]" />
            <div className="w-[11px] shrink-0" />
            <div className="w-[249px] shrink-0 h-[888px] border-x border-[#e6e6e6] flex flex-col">
              <div className="h-[33px] shrink-0 flex items-center pl-[34px] text-[14px] text-[#333] whitespace-nowrap">工序导航器 - 程序顺序</div>
              <div className="h-[27px] shrink-0 bg-[#f1f1f1] border-b border-[#d5d5d5]" />
              <div className="flex-1 min-h-0 overflow-hidden text-[14px] text-[#444]">
                {Array.from({ length: 34 }).map((_, i) => (
                  <div key={i} className={`h-[24px] flex items-center whitespace-nowrap overflow-hidden border-b border-[#f0f0f0] ${i % 2 ? "bg-[#fafafa]" : "bg-white"} ${TREE[i] ? TREE[i][1] : ""}`}>
                    {TREE[i] ? TREE[i][0] : ""}
                  </div>
                ))}
              </div>
              <div className="h-[17px] shrink-0 bg-[#eeeeee] flex items-center text-[#444]">
                <div className="w-[22px] shrink-0 flex justify-center"><svg viewBox="0 0 8 12" className="w-[8px] h-[12px]" fill="none"><path d="M6.5 1 1.5 6l5 5" stroke="#444" strokeWidth="2" /></svg></div>
                <div className="w-[56px] h-full bg-[#c8c8c8]" />
                <div className="ml-auto w-[24px] flex justify-center"><svg viewBox="0 0 8 12" className="w-[8px] h-[12px]" fill="none"><path d="M1.5 1l5 5-5 5" stroke="#444" strokeWidth="2" /></svg></div>
              </div>
              <div className="h-[5px] shrink-0" />
              <div className="h-[4px] shrink-0 bg-[#c6c6c6]" />
            </div>
            <div className="w-[7px] shrink-0" />
            <div className="w-[38px] shrink-0 bg-[#dadada] border-l border-[#a0a0a0] flex flex-col items-center">
              <div className="h-[32px] flex items-center justify-center"><Gear /></div>
              <div className="mt-[25px] h-[34px] flex items-center">{Rail1[0]}</div>
              <div className="mt-[15px] h-[34px] flex items-center">{Rail1[1]}</div>
              <div className="mt-[17px] h-[34px] flex items-center">{Rail1[2]}</div>
              <div className="mt-[7px] h-[52px] w-[35px] self-start bg-white flex items-center justify-center shadow-[1px_1px_1px_#aaa]">{Rail2[0]}</div>
              {Rail2.slice(1).map((n, i) => {
                const g = ["mt-[8px]", "mt-[15px]", "mt-[16px]", "mt-[31px]", "mt-[31px]", "mt-[28px]", "mt-[17px]", "mt-[17px]", "mt-[15px]", "mt-[15px]"][i];
                return <div key={i} className={`${g} h-[34px] flex items-center`}>{n}</div>;
              })}
              <div className="mt-[17px] h-[20px] flex items-center">
                <svg viewBox="0 0 30 16" className="w-[30px] h-[16px]" fill="none"><path d="M1 4h16l6-1 5 5-6-2-5 4-7 2-8-3Z" fill="#e4e4f4" stroke="#444" /></svg>
              </div>
              {[0, 1].map((k) => <div key={k} className="h-[18px] flex items-center"><div className="w-[8px] h-[5px] bg-[#bbb] [clip-path:polygon(50%_0,100%_100%,0_100%)]" /></div>)}
              {[0, 1].map((k) => <div key={k} className="h-[18px] flex items-center"><Caret /></div>)}
            </div>
          </div>
        </div>

        {/* status */}
        <div className="h-[27px] shrink-0 bg-white border-t border-[#bbb] flex items-center pl-[8px] pb-[2px] text-[13px] font-medium text-[#222]">拖动光标以绕 X-Y 旋转视图</div>
        <div className="h-[4px] shrink-0 bg-[#5f8a86]" />

        <div className="absolute left-[1154px] top-[1025px] text-[25.5px] leading-[32px] text-[#9a9a9a]/70 whitespace-nowrap z-20">激活 Windows</div>
        <div className="absolute left-[1154px] top-[1055px] text-[18px] leading-[24px] text-[#9a9a9a]/70 whitespace-nowrap z-20">转到"设置"以激活 Windows。</div>
        <div className="absolute left-[1282px] top-[1054px] w-[14px] h-[14px] bg-[#5c7fa0] border border-[#ddd] z-20" />

        <Dialog />
      </div>

      <div className="w-[278px] shrink-0 bg-[linear-gradient(100deg,#f4f5f5_0%,#eff0f0_45%,#e9eaea_100%)]" />
    </div>
  );
}
